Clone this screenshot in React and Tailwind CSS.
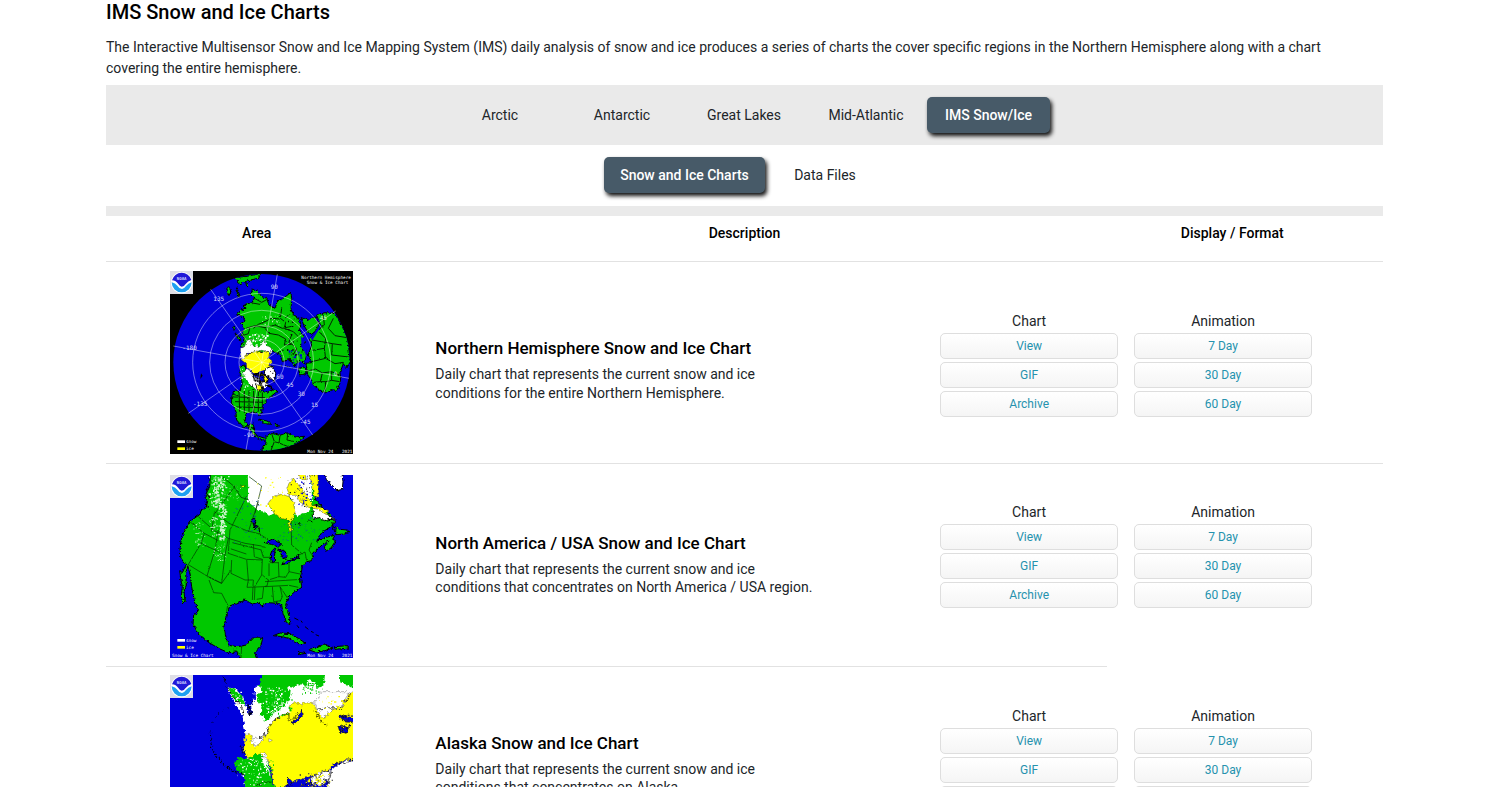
const regions = ["Arctic", "Antarctic", "Great Lakes", "Mid-Atlantic", "IMS Snow/Ice"];

const GREEN = "#00c800";
const BLUE = "#0000dc";

// repeatable scatter of small flecks inside a box
function Flecks({ x, y, w, h, n, fill, seed = 1, size = 4 }) {
  let s = seed * 7919;
  const rnd = () => {
    s = (s * 16807) % 2147483647;
    return s / 2147483647;
  };
  rnd();
  let d = "";
  for (let i = 0; i < n; i++) {
    const fx = Math.round(x + ((rnd() + rnd()) / 2) * w);
    const fy = Math.round(y + rnd() * h);
    const fw = 1 + Math.round(rnd() * size);
    const fh = 1 + Math.round(rnd() * size);
    d += `M${fx} ${fy}h${fw}v${fh}h-${fw}z`;
  }
  return <path d={d} fill={fill} />;
}

function Rough({ id, scale = 11 }) {
  return (
    <filter id={id} x="-5%" y="-5%" width="110%" height="110%" colorInterpolationFilters="sRGB">
      <feTurbulence type="fractalNoise" baseFrequency="0.12" numOctaves="3" seed="4" />
      <feDisplacementMap in="SourceGraphic" scale={scale} xChannelSelector="R" yChannelSelector="G" />
    </filter>
  );
}

function Noaa({ x, y }) {
  return (
    <g transform={`translate(${x} ${y})`}>
      <rect width="69" height="69" fill="#dedee6" />
      <circle cx="35" cy="35" r="32" fill="#fff" />
      <path d="M6 28A30 30 0 0 1 64 27Q54 30 47 39Q42 47 35 47Q29 46 25 39Q18 29 6 28Z" fill="#2018d8" />
      <path d="M5 34Q16 36 22 44Q28 54 36 54Q43 52 48 45Q54 37 65 34A30 30 0 0 1 5 34Z" fill="#1ea0f0" />
      <text x="35" y="27" textAnchor="middle" fontSize="12" fontWeight="700" fill="#d8d8ff">NOAA</text>
    </g>
  );
}

function Legend({ y }) {
  return (
    <g fontSize="13" fill="#fff">
      <rect x="37" y={y} width="23" height="8" />
      <text x="63" y={y + 8}>snow</text>
      <rect x="37" y={y + 21} width="23" height="8" fill="#ff0" />
      <text x="63" y={y + 29}>ice</text>
    </g>
  );
}

const mapClass = "block size-[183px] font-['DejaVu_Sans_Mono',monospace]";

function HemisphereMap() {
  return (
    <svg viewBox="15 18 549 549" className={mapClass} role="img" aria-label="Northern Hemisphere">
      <defs>
        <Rough id="rough1" />
        <Rough id="borders1" scale={6} />
        <clipPath id="globe"><circle cx="290" cy="292" r="265" /></clipPath>
      </defs>
      <rect x="15" y="18" width="549" height="549" fill="#000" />
      <circle cx="290" cy="292" r="265" fill={BLUE} />
      <g clipPath="url(#globe)">
        <g filter="url(#rough1)" stroke="#000" strokeWidth="3">
          <g fill={GREEN}>
            <path d="M262 72L278 78L290 95L305 100L312 120L330 130L338 108L355 100L378 82L380 100L378 130L385 150L400 158L408 178L402 195L415 215L418 232L405 240L422 252L425 270L418 295L404 288L388 302L375 284L352 290L345 268L318 256L300 262L268 262L240 262L228 240L240 225L230 206L238 190L228 175L240 168L235 155L215 150L228 135L240 130L235 120L262 112L268 100L258 90Z" />
            <path d="M408 158L430 165L450 156L462 176L455 195L440 208L428 200L416 180Z" />
            <path d="M455 150L480 143L510 146L532 185L548 220L556 290L545 310L535 296L525 322L527 350L515 376L498 374L480 384L460 372L445 360L440 345L428 330L423 295L440 293L430 270L440 240L433 222L450 205L468 185Z" />
            <path d="M400 310L420 306L424 326L406 330Z" />
            <path d="M303 517L320 505L345 511L365 503L390 516L419 514L400 530L370 547L340 556L310 562L290 556L303 534Z" />
            <path d="M205 380L225 376L232 356L226 330L225 303L240 300L246 330L258 362L290 378L308 384L320 373L336 380L318 394L305 402L302 415L292 422L290 440L286 452L278 446L262 441L243 447L240 468L250 482L263 474L268 490L256 488L230 482L215 465L212 435L200 415L200 398Z" />
            <path d="M250 484L268 492L275 512L300 520L296 526L272 516Z" />
            <path d="M206 38L245 34L285 26L280 40L252 46L225 56Z" />
            <path d="M190 62L198 80L192 92L184 74ZM216 68L224 92L218 98ZM242 52L252 60L246 66ZM206 182L213 190L207 196ZM210 205L220 212L230 228L222 226ZM280 462L306 468L322 478L298 476ZM330 478L344 480L336 486Z" />
          </g>
          <path fill="#fff" d="M226 250L238 246L246 226L262 222L255 240L282 247L292 236L297 222L304 240L318 248L322 262L290 256L262 262L248 262L240 284L228 285Z" strokeWidth="1" />
          <path fill="#fff" d="M232 320L250 312L262 330L290 348L310 356L300 370L275 376L262 364L250 352Z" strokeWidth="1" />
          <path fill="#ff0" d="M229 285L250 266L262 262L275 258L290 264L302 257L318 264L310 278L322 288L312 300L326 306L312 314L296 316L282 322L268 328L256 316L245 308L244 296Z" strokeWidth="1" />
          <path fill="#fff" d="M300 312L322 303L332 325L328 352L312 338L298 326Z" />
          <path fill="#ff0" d="M272 362L290 358L294 374L278 376ZM286 326L300 330L312 346L300 354L296 340Z" />
          <path fill="none" strokeWidth="4" d="M262 330L280 324L285 340L270 344ZM276 350L300 352M300 360L318 364L322 376M268 344L290 346" />
        </g>
        <g filter="url(#borders1)" fill="none" stroke="#002400" strokeWidth="3">
          <path d="M243 190L270 182L300 188L330 180L352 190L380 184M265 190L280 178L300 170L320 160L345 162M300 190L312 205L340 210L362 222L358 240L380 238M350 130L346 160L362 172L358 190L385 200L400 215M255 186L250 206L232 212M370 150L360 160M380 210L372 230L395 250L384 270M268 100L290 112L305 104M262 114L285 118" />
          <path d="M475 150L478 180L462 195M505 160L490 190L510 212L546 218M440 225L470 230L502 236L530 240M462 200L482 220L478 250L442 256M502 236L500 270L552 276M478 250L482 280L440 290M482 280L510 296L535 292M428 318L452 312L472 324L466 350L446 352M472 324L500 320L522 330M480 380L482 350L500 346L500 320M482 350L466 350M500 346L524 350" />
          <path d="M205 396L300 398M210 410L300 412M214 426L290 428M222 380L224 440M238 378L238 444M252 376L252 440M266 378L266 440M280 380L280 440M292 382L292 422M204 388L220 392M320 506L328 530L318 556M345 512L342 534L370 545M328 530L342 534M368 505L366 525L390 530" />
        </g>
        <Flecks x={240} y={205} w={70} h={36} n={45} fill="#fff" seed={3} size={5} />
        <Flecks x={285} y={150} w={75} h={30} n={22} fill="#dff5df" seed={5} size={3} />
        <Flecks x={225} y={310} w={34} h={70} n={30} fill="#fff" seed={8} size={4} />
        <Flecks x={335} y={250} w={90} h={60} n={30} fill={BLUE} seed={9} size={6} />
        <Flecks x={335} y={250} w={90} h={60} n={35} fill="#001400" seed={14} size={5} />
        <Flecks x={250} y={318} w={75} h={58} n={38} fill="#000" seed={12} size={6} />
        <Flecks x={345} y={145} w={60} h={100} n={25} fill="#001400" seed={15} size={4} />
        <path d="M408 215L420 225L416 238L424 245L426 285L420 262L410 248ZM428 205L440 216L466 178L468 184L442 226Z" fill={BLUE} />
        <path d="M108 325L113 332L106 342Z" />
      </g>
      <g fill="none" stroke="#fff" strokeOpacity="0.65" strokeWidth="2">
        <circle cx="290" cy="292" r="207" />
        <circle cx="290" cy="292" r="156" />
        <circle cx="290" cy="292" r="110" />
        <circle cx="290" cy="292" r="68" />
        <path d="M25 243L552 340M337 28L243 555M137 73L443 510M70 445L512 138" />
      </g>
      <g fontSize="18" fill="#fff" fillOpacity="0.85">
        <text x="317" y="72">90</text>
        <text x="145" y="107">135</text>
        <text x="52" y="254">-180</text>
        <text x="84" y="422">-135</text>
        <text x="235" y="516">-90</text>
        <text x="404" y="478">-45</text>
        <text x="438" y="426">15</text>
        <text x="398" y="394">30</text>
        <text x="364" y="365">45</text>
        <text x="334" y="341">60</text>
        <text x="506" y="333">0</text>
        <text x="464" y="166">45</text>
      </g>
      <Noaa x={15} y={18} />
      <Legend y={526} />
      <g fontSize="13" fill="#fff">
        <text x="409" y="42">Northern Hemisphere</text>
        <text x="425" y="58">Snow &amp; Ice Chart</text>
        <text x="427" y="564">Mon Nov 24</text>
        <text x="531" y="564">2021</text>
      </g>
    </svg>
  );
}

function NorthAmericaMap() {
  return (
    <svg viewBox="15 15 549 549" className={mapClass} role="img" aria-label="North America / USA">
      <defs>
        <Rough id="rough2" />
        <Rough id="borders2" scale={6} />
      </defs>
      <rect x="15" y="15" width="549" height="549" fill={BLUE} />
      <g filter="url(#rough2)" stroke="#000" strokeWidth="3">
        <path fill={GREEN} d="M136 5L134 50L120 78L128 95L122 115L108 122L105 133L78 152L62 178L50 200L45 235L48 265L63 285L52 308L44 302L46 320L52 350L49 378L54 402L60 396L57 365L64 345L62 310L68 290L75 310L80 350L84 372L90 400L100 422L86 438L84 462L100 490L130 517L165 537L190 548L215 546L230 570L275 570L270 548L287 530L293 505L262 504L245 525L215 530L190 525L182 500L177 470L185 430L195 407L215 402L240 390L262 402L280 397L290 408L308 398L340 400L350 405L355 435L365 458L374 462L374 440L362 405L368 385L390 364L410 350L406 322L412 290L425 275L440 272L445 250L474 222L492 212L478 230L482 244L498 234L512 212L503 208L510 196L478 203L455 214L470 188L500 168L512 156L495 132L470 110L452 90L445 5Z" />
        <path fill={GREEN} d="M513 168L524 178L548 180L552 188L538 192L512 194Z" />
        <path fill={GREEN} d="M325 497L345 489L375 491L400 505L422 520L396 521L370 504L345 499ZM428 538L455 534L478 521L502 534L478 543L450 546ZM508 530L548 527L550 534L510 538ZM396 546L420 550L404 554Z" />
        <path fill="#fff" strokeWidth="1" stroke="none" d="M248 5L250 60L248 95L262 106L280 122L300 125L312 138L328 130L310 105L326 80L350 74L378 84L388 112L384 128L398 138L415 130L428 128L436 118L432 104L442 92L440 60L440 5Z" />
        <path fill="#fff" d="M444 122L450 105L470 112L485 132L514 150L495 148L478 152L462 142L446 148Z" />
        <path fill={BLUE} d="M462 5L478 5L480 30L500 52L520 64L564 72L564 5L540 5L538 40L552 60L562 100L520 130L494 118L470 98L464 80Z" stroke="none" />
        <path fill="#ff0" strokeWidth="1" d="M308 102L325 80L350 72L372 80L386 98L390 128L385 150L378 154L382 182L374 186L370 168L372 150L350 146L330 134L322 120Z" />
        <path fill="#ff0" strokeWidth="1" d="M372 40L385 24L398 42L412 60L430 82L442 104L462 112L492 122L484 134L460 118L430 112L405 96L396 76L374 76L366 56ZM430 5L458 5L462 82L446 78L442 45ZM395 5L405 26L424 30L418 5ZM226 45L242 48L234 54Z" />
        <path fill="#fff" d="M474 5L530 5L534 35L532 58L516 62L500 48L484 28Z" />
        <path fill={BLUE} d="M300 218L325 206L350 222L340 231L322 224ZM322 238L330 234L328 276L319 279L316 255ZM336 234L360 244L368 262L354 266L348 250ZM350 284L365 272L384 270L372 280ZM380 266L402 256L400 264L384 270ZM268 145L276 170L270 178L260 148Z" />
        <path fill="none" strokeWidth="3" d="M132 40L122 66L134 84L122 100L132 118M272 150L268 180M282 170L284 190M232 398L240 392M500 155L510 188M388 160L408 162M430 150L442 156" />
      </g>
      <g filter="url(#borders2)" fill="none" stroke="#003000" strokeWidth="2">
        <path d="M172 20L206 48L228 82L252 90M212 45L150 130M245 78L196 178M280 95L250 185M148 125L192 160L245 182L285 192L310 210M100 140L148 182L190 205L240 220L290 228M78 158L118 190L108 220L66 290M148 128L140 185M118 190L160 212M160 180L150 240L108 220M150 240L126 318L70 284M190 205L180 255L150 240M180 255L170 340L126 318M195 178L190 250L244 268L292 270M202 218L290 240M196 236L244 252M200 270L198 310L240 330M198 300L170 340L132 322M132 330L146 368L170 370L188 405L185 425M245 268L250 330L246 352L296 350M240 330L265 330L262 390M265 222L268 260L292 268L290 315L270 348L268 390M290 230L302 232M288 240L295 262L316 262M292 315L310 330L306 348L296 350L292 385L275 388M340 278L342 320L310 330M312 280L312 318M316 278L342 278M300 335L410 328M300 350L372 346L400 352M372 276L372 305L405 312M342 320L362 322L372 305M322 350L326 395M345 350L352 380L345 395M345 350L368 385M326 395L348 392M378 155L380 225L410 250M252 20L290 48L270 130M400 256L420 246L425 272M440 218L432 240L445 262M230 530L228 562M205 540L225 552" />
      </g>
      <g opacity="0.8">
        <Flecks x={128} y={18} w={64} h={92} n={150} fill="#fff" seed={4} size={6} />
        <Flecks x={158} y={95} w={24} h={118} n={110} fill="#fff" seed={6} size={6} />
        <Flecks x={130} y={140} w={36} h={60} n={45} fill="#d8f6d8" seed={7} size={4} />
        <Flecks x={78} y={150} w={46} h={80} n={50} fill="#c8f2c8" seed={10} size={3} />
        <Flecks x={140} y={220} w={50} h={52} n={50} fill="#d8f6d8" seed={11} size={3} />
        <Flecks x={170} y={45} w={84} h={46} n={35} fill="#d8f6d8" seed={19} size={2} />
      </g>
      <Flecks x={180} y={80} w={120} h={140} n={60} fill="#0850a0" seed={13} size={3} />
      <Flecks x={320} y={140} w={150} h={75} n={70} fill="#0850a0" seed={16} size={3} />
      <Flecks x={250} y={20} w={120} h={100} n={25} fill="#ff0" seed={17} size={4} />
      <Flecks x={365} y={15} w={85} h={90} n={40} fill={BLUE} seed={18} size={4} />
      <Flecks x={365} y={15} w={95} h={95} n={35} fill="#222" seed={20} size={3} />
      <path d="M388 444L400 450M396 466L402 474M408 452L412 458M420 470L430 478M438 484L446 488M452 494L462 498" stroke="#000" strokeWidth="3" />
      <Noaa x={15} y={15} />
      <Legend y={507} />
      <g fontSize="13" fill="#fff">
        <text x="21" y="560">Snow &amp; Ice Chart</text>
        <text x="427" y="560">Mon Nov 24</text>
        <text x="531" y="560">2021</text>
      </g>
    </svg>
  );
}

function AlaskaMap() {
  return (
    <svg viewBox="15 30 549 549" className={mapClass} role="img" aria-label="Alaska">
      <defs><Rough id="rough3" scale={16} /></defs>
      <rect x="15" y="30" width="549" height="549" fill={BLUE} />
      <g filter="url(#rough3)">
        <path fill="#fff" d="M292 20L574 20L574 140L520 180L300 300L250 290L238 240L240 200L232 150L190 78L188 66L215 74L236 100L246 140L262 150L258 120L270 100L268 70L290 56Z" />
        <path fill={GREEN} d="M292 20L480 20L478 56L458 70L446 50L428 44L424 60L402 58L388 66L368 62L380 86L372 104L362 122L340 134L325 142L314 160L300 170L296 156L286 150L290 122L278 108L274 90L290 82L285 60ZM522 20L574 20L574 76L545 60L522 46ZM190 66L212 76L232 92L240 120L226 114L205 98Z" />
        <path fill="#ff0" stroke="#222" strokeWidth="1" d="M300 215L320 172L350 150L376 142L372 120L392 112L412 120L416 112L446 116L456 140L480 160L484 150L500 132L530 130L544 98L574 70L574 285L540 284L500 302L492 316L460 326L420 340L380 352L350 372L324 362L318 310L300 262L278 270L258 284L244 276L236 250L242 206L262 212L258 236L272 246Z" />
        <path fill="#fff" d="M262 222L298 214L286 236L270 240ZM500 312L540 286L574 290L574 380L480 380L490 340ZM436 340L470 320L498 314L492 340L470 362L440 356ZM296 270L310 290L318 340L300 332L290 300ZM448 112L470 160L484 152L500 132L530 128L544 96L556 80L470 80Z" stroke="#222" strokeWidth="1" />
        <path fill={GREEN} d="M208 290L226 276L250 284L270 266L290 270L298 302L316 334L322 360L360 372L360 600L200 600L240 366L236 330L212 314Z" />
        <path fill={BLUE} d="M522 150L574 160L574 172L530 166ZM520 184L550 190L546 204L524 200ZM250 120L260 144L256 152L246 130ZM368 342L380 346L378 362L366 366ZM228 240L238 262L232 264ZM376 176L400 158L410 136L414 146L396 172Z" stroke="#000" strokeWidth="2" />
        <g fill="none" stroke="#000" strokeWidth="3">
          <path d="M186 64L205 98L228 120L238 146L232 154M262 104L252 130L258 152M174 36L184 54M146 262L160 280L178 302L206 318L240 330M136 200L138 236L146 262" strokeDasharray="14 3" />
          <path d="M190 128L164 142L146 166L138 190L136 215" strokeDasharray="4 12" strokeWidth="2" />
          <path d="M320 172L350 152L372 146L372 166L390 160L398 140M450 138L468 170L484 180M456 132L500 128L530 130L530 110L546 106L558 84M500 306L520 290L540 296L564 284M492 316L470 322L460 340L490 350M500 320L490 356L462 360M440 338L440 356L420 356M270 366L300 350L322 352M282 218L300 212L316 180" strokeWidth="2" />
        </g>
      </g>
      <Flecks x={285} y={65} w={100} h={85} n={110} fill="#fff" seed={2} size={5} />
      <Flecks x={290} y={50} w={100} h={110} n={70} fill={GREEN} seed={22} size={5} />
      <Flecks x={400} y={40} w={80} h={45} n={50} fill={GREEN} seed={21} size={4} />
      <Flecks x={212} y={280} w={110} h={80} n={80} fill="#fff" seed={23} size={4} />
      <Flecks x={290} y={285} w={36} h={80} n={45} fill={GREEN} seed={24} size={4} />
      <Flecks x={196} y={74} w={40} h={36} n={20} fill="#fff" seed={25} size={4} />
      <Flecks x={380} y={325} w={130} h={50} n={65} fill="#333" seed={26} size={4} />
      <Flecks x={390} y={325} w={110} h={50} n={40} fill="#ff0" seed={30} size={6} />
      <Flecks x={450} y={90} w={110} h={60} n={28} fill="#ff0" seed={27} size={5} />
      <Flecks x={515} y={145} w={49} h={62} n={36} fill="#113" seed={28} size={5} />
      <path d="M311 221L322 226L312 231Z" fill="#fff" stroke="#333" />
      <Noaa x={15} y={30} />
    </svg>
  );
}

const charts = [
  {
    title: "Northern Hemisphere Snow and Ice Chart",
    lines: ["Daily chart that represents the current snow and ice", "conditions for the entire Northern Hemisphere."],
    Map: HemisphereMap,
    pad: "pt-[9px] pb-[9px]",
    textPad: "pt-[67px]",
    linkPad: "pt-10",
    leading: "leading-[19px]",
    rule: "w-full",
  },
  {
    title: "North America / USA Snow and Ice Chart",
    lines: ["Daily chart that represents the current snow and ice", "conditions that concentrates on North America / USA region."],
    Map: NorthAmericaMap,
    pad: "pt-[11px] pb-2",
    textPad: "pt-[58px]",
    linkPad: "pt-[27px]",
    leading: "leading-[18px]",
    rule: "w-[78.4%]",
  },
  {
    title: "Alaska Snow and Ice Chart",
    lines: ["Daily chart that represents the current snow and ice", "conditions that concentrates on Alaska."],
    Map: AlaskaMap,
    pad: "pt-2 pb-2",
    textPad: "pt-[58px]",
    linkPad: "pt-[31px]",
    leading: "leading-[18px]",
    rule: "w-full",
  },
];

function Tab({ active, wide, children }) {
  return (
    <a
      href="#"
      className={
        active
          ? `${wide ? "w-[161px]" : "w-[123px]"} h-9 rounded-[5px] bg-[#475a68] text-center text-sm leading-9 font-medium text-white shadow-[2px_3px_4px_#111]`
          : `${wide ? "w-[120px]" : "w-[122px]"} h-9 text-center text-sm leading-9`
      }
    >
      {children}
    </a>
  );
}

function LinkGroup({ label, items }) {
  return (
    <div className="flex-1">
      <div className="mb-[2px] text-center text-sm leading-5">{label}</div>
      <div className="space-y-[3px]">
        {items.map(item => (
          <a
            key={item}
            href="#"
            className="block h-[26px] rounded-[5px] border border-[#dedede] bg-gradient-to-b from-white to-[#f5f5f5] text-center text-xs leading-6 text-[#2592ae]"
          >
            {item}
          </a>
        ))}
      </div>
    </div>
  );
}

function Rule({ width }) {
  return (
    <tr>
      <td colSpan={4} className="p-0">
        <div className={`h-px bg-[#e2e2e2] ${width}`} />
      </td>
    </tr>
  );
}

function ChartRow({ chart }) {
  const { Map } = chart;
  return (
    <>
      <tr className="align-top">
        <td className={`pl-16 ${chart.pad}`}><Map /></td>
        <td className={`pl-7 ${chart.pad}`}>
          <div className={chart.textPad}>
            <h2 className="text-[17px] leading-5 font-medium text-black">{chart.title}</h2>
            <p className={`mt-[7px] text-sm ${chart.leading}`}>
              {chart.lines[0]}<br />{chart.lines[1]}
            </p>
          </div>
        </td>
        <td colSpan={2} className={`pr-[71px] pl-2 ${chart.pad}`}>
          <div className={`flex gap-4 ${chart.linkPad}`}>
            <LinkGroup label="Chart" items={["View", "GIF", "Archive"]} />
            <LinkGroup label="Animation" items={["7 Day", "30 Day", "60 Day"]} />
          </div>
        </td>
      </tr>
      <Rule width={chart.rule} />
    </>
  );
}

export default function App() {
  return (
    <main className="bg-white pr-[117px] pl-[106px] font-[Roboto,sans-serif] text-[#212529]">
      <h1 className="text-xl leading-6 font-medium text-black">IMS Snow and Ice Charts</h1>
      <p className="mt-[13px] pr-8 text-sm leading-[21px]">
        The Interactive Multisensor Snow and Ice Mapping System (IMS) daily analysis of snow and ice produces a series of charts the cover specific regions in the Northern Hemisphere along with a chart covering the entire hemisphere.
      </p>
      <nav className="mt-[6px]">
        <div className="flex h-[60px] justify-center bg-[#eaeaea] pt-3">
          {regions.map(r => <Tab key={r} active={r === "IMS Snow/Ice"}>{r}</Tab>)}
        </div>
        <div className="flex h-[61px] justify-center pt-3">
          <Tab active wide>Snow and Ice Charts</Tab>
          <Tab wide>Data Files</Tab>
        </div>
      </nav>
      <div className="h-[10px] bg-[#eaeaea]" />
      <table className="w-full table-fixed">
        <colgroup>
          <col className="w-[23.6%]" />
          <col className="w-[41.1%]" />
          <col className="w-[11.7%]" />
          <col className="w-[23.6%]" />
        </colgroup>
        <thead>
          <tr className="h-[45px] align-top text-sm text-black">
            <th className="pt-[7px] font-medium">Area</th>
            <th colSpan={2} className="pt-[7px] font-medium">Description</th>
            <th className="pt-[7px] font-medium">Display / Format</th>
          </tr>
        </thead>
        <tbody>
          <Rule width="w-full" />
          {charts.map(c => <ChartRow key={c.title} chart={c} />)}
        </tbody>
      </table>
    </main>
  );
}
